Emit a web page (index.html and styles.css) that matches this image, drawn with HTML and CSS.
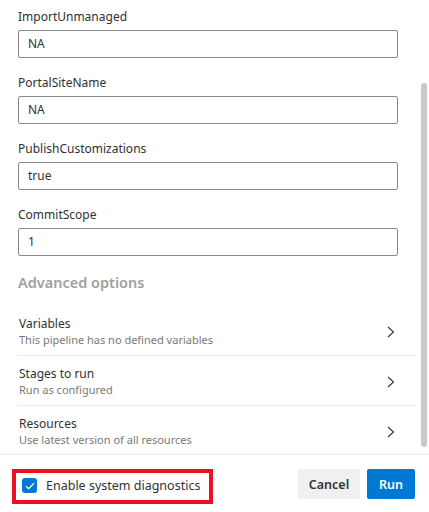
FILE: index.html
```html
<!DOCTYPE html>
<html>
<head>
<meta charset="utf-8">
<link rel="stylesheet" href="styles.css">
</head>
<body>
<div class="panel">
  <div class="scroll">
    <div class="content">
      <div class="field">
        <div class="label">ImportUnmanaged</div>
        <div class="input">NA</div>
      </div>
      <div class="field">
        <div class="label">PortalSiteName</div>
        <div class="input">NA</div>
      </div>
      <div class="field">
        <div class="label">PublishCustomizations</div>
        <div class="input">true</div>
      </div>
      <div class="field">
        <div class="label">CommitScope</div>
        <div class="input">1</div>
      </div>
      <div class="section-title">Advanced options</div>
      <div class="list">
        <div class="item">
          <div class="item-text">
            <div class="item-title">Variables</div>
            <div class="item-sub">This pipeline has no defined variables</div>
          </div>
          <svg class="chev" width="8" height="12" viewBox="0 0 8 12"><path d="M1 1 L6.5 6 L1 11" fill="none" stroke="#333" stroke-width="1.1"/></svg>
        </div>
        <div class="item">
          <div class="item-text">
            <div class="item-title">Stages to run</div>
            <div class="item-sub">Run as configured</div>
          </div>
          <svg class="chev" width="8" height="12" viewBox="0 0 8 12"><path d="M1 1 L6.5 6 L1 11" fill="none" stroke="#333" stroke-width="1.1"/></svg>
        </div>
        <div class="item">
          <div class="item-text">
            <div class="item-title">Resources</div>
            <div class="item-sub">Use latest version of all resources</div>
          </div>
          <svg class="chev" width="8" height="12" viewBox="0 0 8 12"><path d="M1 1 L6.5 6 L1 11" fill="none" stroke="#333" stroke-width="1.1"/></svg>
        </div>
      </div>
    </div>
    <div class="scrollbar"></div>
  </div>
  <div class="footer">
    <label class="diag">
      <span class="check"><svg width="10" height="8" viewBox="0 0 10 8"><path d="M1 4.2 L3.7 6.7 L9 1.3" fill="none" stroke="#fff" stroke-width="1.3"/></svg></span>
      <span class="diag-text">Enable system diagnostics</span>
    </label>
    <div class="buttons">
      <button class="btn cancel">Cancel</button>
      <button class="btn run">Run</button>
    </div>
  </div>
</div>
</body>
</html>
```
FILE: styles.css
```css
* { box-sizing: border-box; }
html, body { margin: 0; padding: 0; background: #fff; }
body {
  font-family: "Noto Sans", "Open Sans", sans-serif;
  color: #323130;
  width: 429px;
  height: 512px;
  overflow: hidden;
}
.panel {
  display: flex;
  flex-direction: column;
  height: 512px;
}
.scroll {
  position: relative;
  height: 454px;
  overflow: hidden;
  flex: none;
}
.content {
  padding: 8px 0 0 18px;
}
.field {
  width: 380px;
  margin-bottom: 16px;
}
.label {
  font-size: 12px;
  line-height: 18px;
  margin-bottom: 4px;
  color: #323130;
}
.input {
  height: 28px;
  border: 1px solid #8a8886;
  border-radius: 2px;
  padding: 0 9px;
  font-size: 12px;
  line-height: 26px;
  color: #323130;
}
.section-title {
  font-size: 14.5px;
  font-weight: 600;
  line-height: 20px;
  color: #a19f9d;
  margin-bottom: 14px;
}
.list {
  width: 398px;
}
.item {
  display: flex;
  align-items: center;
  padding: 9px 21px 7px 1px;
  border-bottom: 1px solid #ebebeb;
}
.item-text { flex: 1; }
.item-title {
  font-size: 12px;
  line-height: 17px;
  color: #323130;
}
.item-sub {
  font-size: 11px;
  line-height: 16px;
  color: #7a7a7a;
}
.chev { display: block; flex-shrink: 0; }
.scrollbar {
  position: absolute;
  left: 421px;
  top: 83px;
  width: 6px;
  height: 364px;
  border-radius: 3px;
  background: #c8c8c8;
}
.footer {
  border-top: 1px solid #ebebeb;
  flex: 1;
  display: flex;
  align-items: flex-start;
  justify-content: space-between;
  padding: 14px 14px 0 12px;
}
.diag {
  display: flex;
  align-items: center;
  width: 201px;
  height: 35px;
  border: 4px solid #e81123;
  padding: 0 0 2px 6px;
}
.check {
  flex-shrink: 0;
  width: 15px;
  height: 15px;
  border-radius: 3px;
  background: #0078d4;
  display: flex;
  align-items: center;
  justify-content: center;
  margin-right: 9px;
}
.diag-text {
  font-size: 12.5px;
  color: #323130;
  white-space: nowrap;
}
.buttons {
  display: flex;
  gap: 7px;
}
.btn {
  height: 30px;
  border: none;
  border-radius: 2px;
  font-family: "Noto Sans", "Open Sans", sans-serif;
  font-size: 12.5px;
  font-weight: 600;
  padding: 0;
}
.cancel {
  width: 62px;
  background: #f0f0f0;
  color: #323130;
}
.run {
  width: 48px;
  background: #0078d4;
  color: #fff;
}
```
